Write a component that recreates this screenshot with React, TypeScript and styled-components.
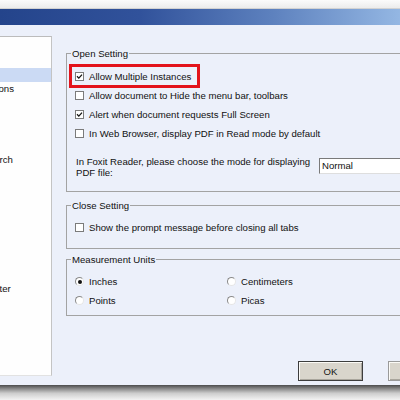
import React from 'react';
import styled, { createGlobalStyle } from 'styled-components';

const Global = createGlobalStyle`
  html, body { margin: 0; padding: 0; background: #f4f4f4; }
  body { font-family: "Liberation Sans", Arial, sans-serif; color: #111; }
`;

const Screen = styled.div`
  width: 400px;
  height: 400px;
  overflow: hidden;
  display: flex;
  flex-direction: column;
  background: #f4f4f4;
`;

const TopEdge = styled.div`
  flex: none;
  height: 9px;
  box-sizing: border-box;
  background: linear-gradient(#fbfbfb, #ececec);
  border-bottom: 1px solid #d2d2d2;
`;

const TitleBar = styled.div`
  flex: none;
  height: 16px;
  background: linear-gradient(to right, #24448b 0%, #31529b 35%, #5d81be 68%, #94b7e3 100%);
`;

const Body = styled.div`
  flex: none;
  height: 360px;
  background: #ecf0fa;
  display: flex;
  align-items: flex-start;
`;

const Shadow = styled.div`
  flex: none;
  height: 15px;
  background: linear-gradient(#4b4b4b 0%, #8a8a8a 25%, #cdcdcd 55%, #f3f3f3 100%);
`;

const CategoryList = styled.div`
  flex: none;
  width: 71px;
  height: 340px;
  margin: 11px 0 0 -19px;
  box-sizing: border-box;
  padding-top: 2px;
  background: #fefefe;
  border-top: 1px solid #bcbcbc;
  border-right: 1px solid #c4c4c4;
  border-bottom: 1px solid #e2e2e2;
  overflow: hidden;
`;

const Category = styled.div<{ $selected?: boolean }>`
  height: 14.3px;
  line-height: 14.3px;
  padding-left: 1.5px;
  font-size: 9.6px;
  white-space: nowrap;
  background: ${(p) => (p.$selected ? '#cbdaf4' : 'transparent')};
`;

const Content = styled.div`
  flex: none;
  width: 400px;
  margin-left: 14px;
  padding-top: 28px;
  display: flex;
  flex-direction: column;
`;

const Group = styled.div<{ $gap: number; $padBottom: number }>`
  position: relative;
  margin-top: ${(p) => p.$gap}px;
  border: 1px solid #a3a3a3;
  padding: 12px 0 ${(p) => p.$padBottom}px 8px;
`;

const Legend = styled.span`
  position: absolute;
  top: -6px;
  left: 4px;
  padding: 0 1px;
  font-size: 9.6px;
  line-height: 11px;
  background: #ecf0fa;
`;

const Row = styled.div`
  display: flex;
  align-items: center;
  height: 19px;
`;

const Highlight = styled.div`
  position: relative;
  display: inline-flex;
  align-items: center;
  height: 19px;
  &::after {
    content: '';
    position: absolute;
    left: -6px;
    right: -9px;
    top: -3px;
    bottom: -2px;
    border: 3px solid #e3131b;
  }
`;

const Label = styled.span`
  font-size: 9.6px;
  line-height: 11px;
  white-space: nowrap;
  margin-left: 5px;
`;

const Box = styled.span`
  flex: none;
  width: 9px;
  height: 9px;
  box-sizing: border-box;
  border: 1px solid #7b7b7b;
  background: #fff;
  display: flex;
  align-items: center;
  justify-content: center;
`;

const Radio = styled.span`
  flex: none;
  width: 9px;
  height: 9px;
  box-sizing: border-box;
  border-radius: 50%;
  border: 1px solid;
  border-color: #8a8a8a #e6e6e6 #e6e6e6 #8a8a8a;
  background: #fff;
  display: flex;
  align-items: center;
  justify-content: center;
`;

const Dot = styled.span`
  width: 4px;
  height: 4px;
  border-radius: 50%;
  background: #111;
`;

const ModeRow = styled.div`
  display: flex;
  align-items: flex-start;
  margin-top: 13px;
`;

const ModeText = styled.div`
  flex: none;
  width: 240px;
  margin-left: 1px;
  font-size: 9.6px;
  line-height: 11px;
  white-space: nowrap;
`;

const Select = styled.div`
  flex: none;
  width: 130px;
  height: 16px;
  margin: 1.5px 0 0 3px;
  box-sizing: border-box;
  border: 1px solid;
  border-color: #7a7a7a #dedede #dedede #7a7a7a;
  background: #fff;
  padding-left: 2px;
  font-size: 9.6px;
  line-height: 14px;
`;

const RadioGrid = styled.div`
  display: grid;
  grid-template-columns: 152px 1fr;
  grid-auto-rows: 19px;
`;

const ButtonRow = styled.div`
  display: flex;
  justify-content: flex-end;
  gap: 25px;
  margin-top: 45px;
  padding-right: 13px;
`;

const Button = styled.div<{ $default?: boolean }>`
  width: 65px;
  height: 20px;
  box-sizing: border-box;
  border: 1px solid ${(p) => (p.$default ? '#3d3d3d' : '#9a9a9a')};
  box-shadow: inset 1px 1px 0 #fbfaf6, inset -1px -1px 0 #a9a59c;
  background: #d9d5cc;
  display: flex;
  align-items: center;
  justify-content: center;
  font-size: 9.6px;
  color: #151515;
`;

const Check = () => (
  <svg width="7" height="7" viewBox="0 0 7 7">
    <path d="M1 3.3 L2.8 5.1 L6 1.6" fill="none" stroke="#111" strokeWidth="1.3" />
  </svg>
);

const CheckItem = ({ checked, label }: { checked?: boolean; label: string }) => (
  <Row>
    <Box>{checked && <Check />}</Box>
    <Label>{label}</Label>
  </Row>
);

const RadioItem = ({ selected, label }: { selected?: boolean; label: string }) => (
  <Row>
    <Radio>{selected && <Dot />}</Radio>
    <Label>{label}</Label>
  </Row>
);

const categories = [
  '', '', '', 'Actions', '', '', '', '', 'Search', '', '', '', '', '', '', '', '', 'Printer',
  '', '', '', '', '',
];

export default function App() {
  return (
    <>
      <Global />
      <Screen>
        <TopEdge />
        <TitleBar />
        <Body>
          <CategoryList>
            {categories.map((c, i) => (
              <Category key={i} $selected={i === 2}>
                {c}
              </Category>
            ))}
          </CategoryList>
          <Content>
            <Group $gap={0} $padBottom={13}>
              <Legend>Open Setting</Legend>
              <Highlight>
                <Box>
                  <Check />
                </Box>
                <Label>Allow Multiple Instances</Label>
              </Highlight>
              <CheckItem label="Allow document to Hide the menu bar, toolbars" />
              <CheckItem checked label="Alert when document requests Full Screen" />
              <CheckItem label="In Web Browser, display PDF in Read mode by default" />
              <ModeRow>
                <ModeText>
                  In Foxit Reader, please choose the mode for displaying
                  <br />
                  PDF file:
                </ModeText>
                <Select>Normal</Select>
              </ModeRow>
            </Group>
            <Group $gap={13} $padBottom={11}>
              <Legend>Close Setting</Legend>
              <CheckItem label="Show the prompt message before closing all tabs" />
            </Group>
            <Group $gap={10} $padBottom={5}>
              <Legend>Measurement Units</Legend>
              <RadioGrid>
                <RadioItem selected label="Inches" />
                <RadioItem label="Centimeters" />
                <RadioItem label="Points" />
                <RadioItem label="Picas" />
              </RadioGrid>
            </Group>
            <ButtonRow>
              <Button $default>OK</Button>
              <Button>Cancel</Button>
            </ButtonRow>
          </Content>
        </Body>
        <Shadow />
      </Screen>
    </>
  );
}
